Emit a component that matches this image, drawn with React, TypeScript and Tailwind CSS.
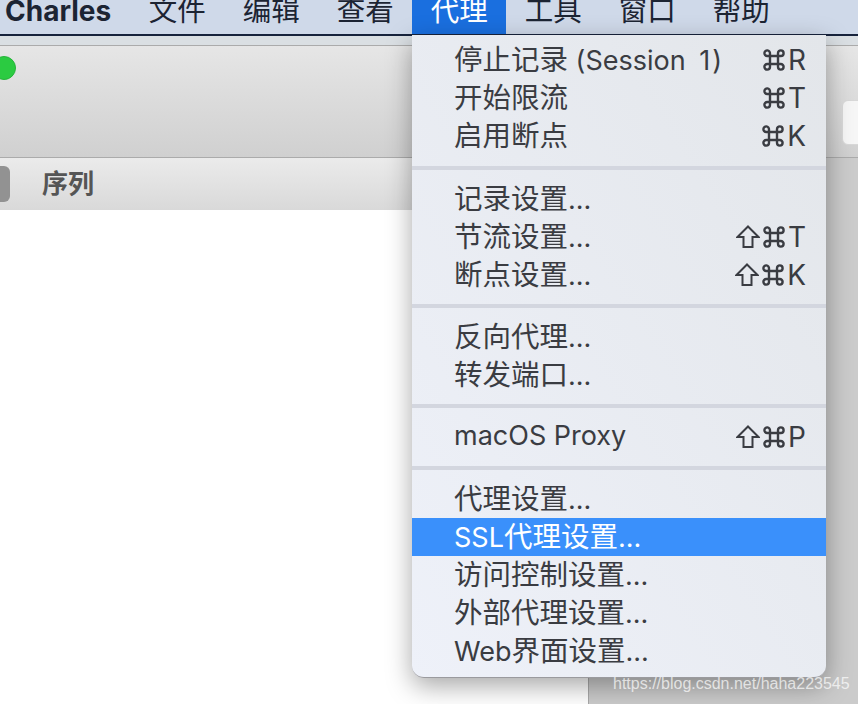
const cjk = "font-['Inter','Noto_Sans_CJK_SC',sans-serif]";

type Item = { label: string; keys?: string; active?: boolean };
const groups: Item[][] = [
  [
    { label: "停止记录 (Session 1)", keys: "⌘R" },
    { label: "开始限流", keys: "⌘T" },
    { label: "启用断点", keys: "⌘K" },
  ],
  [
    { label: "记录设置..." },
    { label: "节流设置...", keys: "⇧⌘T" },
    { label: "断点设置...", keys: "⇧⌘K" },
  ],
  [{ label: "反向代理..." }, { label: "转发端口..." }],
  [{ label: "macOS Proxy", keys: "⇧⌘P" }],
  [
    { label: "代理设置..." },
    { label: "SSL代理设置...", active: true },
    { label: "访问控制设置..." },
    { label: "外部代理设置..." },
    { label: "Web界面设置..." },
  ],
];

function Label({ value }: { value: string }) {
  if (value.includes("Session")) {
    return (
      <span className="whitespace-pre">
        <span className="text-[28.5px]">停止记录</span>
        <span className="text-[27px]"> (<span className="[word-spacing:6px]">Session 1</span><span className="ml-[2px]">)</span></span>
      </span>
    );
  }
  if (value === "macOS Proxy") {
    return <span className="whitespace-pre text-[27px] -translate-y-[1px]">{value}</span>;
  }
  const parts = value.split(/([\u4e00-\u9fff]+)/).filter(Boolean);
  return (
    <span className="whitespace-pre">
      {parts.map((p, i) =>
        /[\u4e00-\u9fff]/.test(p) ? (
          <span key={i} className="text-[28.5px]">{p}</span>
        ) : (
          <span key={i} className="text-[27px]">{p}</span>
        )
      )}
    </span>
  );
}

function Keys({ value }: { value: string }) {
  return (
    <span className="flex items-center gap-[2px]">
      {value.split("").map((k, i) =>
        k === "⇧" ? (
          <svg key={i} width="24" height="24" viewBox="0 0 24 24" fill="none" stroke="#3a3c42" strokeWidth="2" strokeLinejoin="miter">
            <path d="M12 1.5 L22.5 12 H16.5 V22 H7.5 V12 H1.5 Z" />
          </svg>
        ) : k === "⌘" ? (
          <svg key={i} width="24" height="24" viewBox="0 0 24 24" fill="none" stroke="#3a3c42" strokeWidth="2.4">
            <path d="M8 8 H16 V16 H8 Z M8 8 V5.5 A2.8 2.8 0 1 0 5.2 8 H8 M16 8 H18.8 A2.8 2.8 0 1 0 16 5.2 V8 M16 16 V18.8 A2.8 2.8 0 1 0 18.8 16 H16 M8 16 H5.2 A2.8 2.8 0 1 0 8 18.8 V16" />
          </svg>
        ) : (
          <span key={i}>{k}</span>
        )
      )}
    </span>
  );
}

export default function App() {
  return (
    <div className={`relative w-[858px] h-[704px] overflow-hidden bg-white ${cjk}`}>
      {/* menu bar */}
      <div className="flex h-[36px] bg-[#cfd9e9] border-b-2 border-[#17233c] text-[28.5px] leading-[22px] text-[#1c2433]">
        <span className="pl-[5px] pr-[19px] text-[28px] font-bold">Charles</span>
        <span className="px-[18.5px]">文件</span>
        <span className="px-[18.5px]">编辑</span>
        <span className="px-[18.5px]">查看</span>
        <span className="px-[18.5px] bg-[#1a6fdf] text-white">代理</span>
        <span className="px-[18.5px]">工具</span>
        <span className="px-[18.5px]">窗口</span>
        <span className="px-[18.5px]">帮助</span>
      </div>
      {/* window chrome */}
      <div className="h-[9px] bg-[#dadfe3]" />
      <div className="relative h-[113px] border-t border-b border-[#ababab] bg-gradient-to-b from-[#e6e6e6] to-[#d0d0d0]">
        <div className="absolute left-[-8px] top-[10px] w-[24px] h-[24px] rounded-full bg-[#2bcb41] border border-[#25b53a]" />
        <div className="absolute left-[842px] top-[54px] w-[40px] h-[45px] rounded-[6px] bg-[#f6f6f6] border border-[#d8d8d8]" />
      </div>
      <div className="flex h-[546px]">
        <div className="w-[588px] flex flex-col">
          <div className="relative h-[52px] flex items-center pb-[2px] bg-gradient-to-b from-[#ebebeb] to-[#d9d9d9] text-[26px] font-bold text-[#555555]">
            <div className="absolute left-[-10px] top-[8px] w-[20px] h-[36px] rounded-[6px] bg-[#929292]" />
            <span className="ml-[42px]">序列</span>
          </div>
          <div className="flex-1 bg-white" />
        </div>
        <div className="flex-1 border-l border-[#a9a9a9] bg-[#cbcbcb]" />
      </div>

      {/* dropdown */}
      <div className="absolute left-[412px] top-[35px] w-[414px] h-[643px] pt-[6px] rounded-b-[12px] bg-gradient-to-bl from-[#e3e6ea] to-[#eef1f9] border-b border-[#9a9a9e] shadow-[0_8px_26px_rgba(0,0,0,0.35)] text-[28px] leading-[38px] text-[#3a3c42]">
        {groups.map((g, i) => (
          <div key={i}>
            {i > 0 && <div className={`h-[4px] mb-[10px] bg-[#d3d6df] ${i === 1 ? "mt-[11px]" : "mt-[10px]"}`} />}
            {g.map((it) => (
              <div
                key={it.label}
                className={`flex h-[38px] items-center justify-between pl-[42px] pr-[20px] ${it.active ? "bg-[#3a90fb] text-white" : ""}`}
              >
                <Label value={it.label} />
                {it.keys && <Keys value={it.keys} />}
              </div>
            ))}
          </div>
        ))}
      </div>

      {/* watermark */}
      <div className="absolute left-[613px] top-[673px] font-['Liberation_Sans',sans-serif] text-[16px] leading-[22px] text-white/70 whitespace-nowrap">
        https://blog.csdn.net/haha223545
      </div>
    </div>
  );
}
